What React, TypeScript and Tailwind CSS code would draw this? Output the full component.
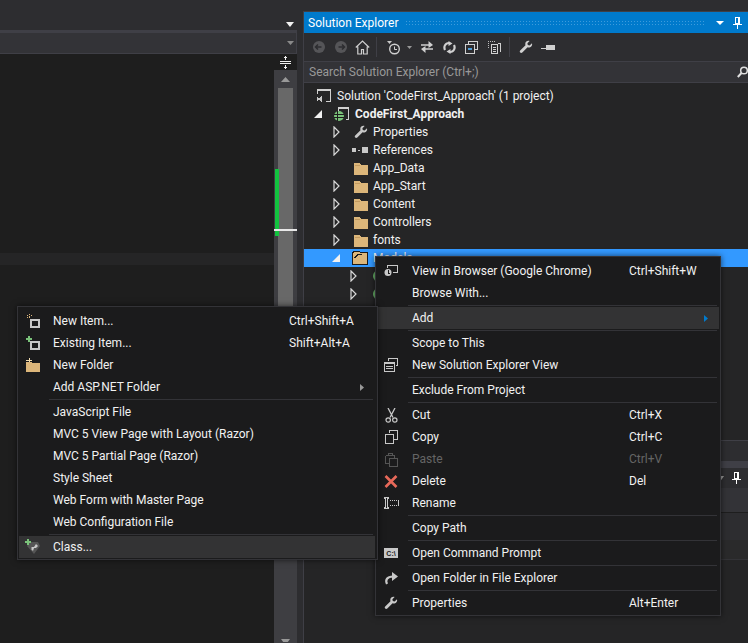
import type { ReactNode } from "react";

const Svg = ({ w = 16, h = 16, children }: { w?: number; h?: number; children: ReactNode }) => (
  <svg width={w} height={h} viewBox={`0 0 ${w} ${h}`} fill="none" shapeRendering="crispEdges" className="shrink-0">
    {children}
  </svg>
);

const Smooth = ({ w = 16, h = 16, children }: { w?: number; h?: number; children: ReactNode }) => (
  <svg width={w} height={h} viewBox={`0 0 ${w} ${h}`} fill="none" className="shrink-0">
    {children}
  </svg>
);

const FolderIcon = () => (
  <Svg w={14} h={13}>
    <path d="M0 1h6l1 2h7v10H0z" fill="#dcb67a" />
    <path d="M1 3h5v1H1z" fill="#c29a5f" />
  </Svg>
);

const OpenFolderIcon = () => (
  <Svg w={16} h={14}>
    <path d="M.5 2.500l1-2h6l1 1h7v12h-15z" fill="#dcb67a" stroke="#1b1b1c" />
    <path d="M2 6l3-3h5v1H6L3 7H2z" fill="#1b1b1c" />
  </Svg>
);

const WrenchIcon = ({ color = "#c8c8c8" }: { color?: string }) => (
  <Smooth w={14} h={14}>
    <path d="M13 3.200 10.600 5.400 8.800 5 8.400 3.200 10.600 1C8.600.3 6.600 1.400 6.300 3.400c-.1.7 0 1.300.2 1.800L1.200 10.400c-.6.6-.6 1.500 0 2.100.6.6 1.500.6 2.100 0l5.300-5.200c.6.200 1.200.3 1.800.2 2-.3 3.200-2.300 2.600-4.300z" fill={color} />
  </Smooth>
);

const RefsIcon = () => (
  <Svg w={16} h={8}>
    <path d="M0 2h4v4H0zM10 1h6v6h-6z" fill="#c8c8c8" />
    <path d="M6 4h2v1H6z" fill="#c8c8c8" />
  </Svg>
);

const SolutionIcon = () => (
  <Svg w={16} h={14}>
    <path d="M1.500 5V.5h13v12H10M1.500 1.500h13" stroke="#d0d0d0" />
    <path d="M1 8l2 1.500L6 7v6l-3-2.500L1 12z" fill="#c8c8c8" />
  </Svg>
);

const ProjectIcon = () => (
  <Svg w={15} h={14}>
    <path d="M4.500 4V.5h10v12H12M4.500 1.500h10" stroke="#d0d0d0" />
    <circle cx="5" cy="9" r="5" fill="#7ac27a" shapeRendering="auto" />
    <path d="M0 7h10v.5H0zM0 10h10v.5H0zM3 4h.5v10H3zM6.500 4h.5v10h-.5z" fill="#1e1e1e" />
  </Svg>
);

const ArrowOpen = () => (
  <Svg w={8} h={8}>
    <path d="M8 0v8H0z" fill="#f1f1f1" shapeRendering="auto" />
  </Svg>
);

const ArrowClosed = () => (
  <Smooth w={7} h={12}>
    <path d="M1 1l5 5-5 5z" stroke="#d8d8d8" strokeWidth="1.200" />
  </Smooth>
);

const GreenDot = () => <div className="h-[12px] w-[12px] rounded-full bg-[#68b168]" />;

type TreeItem = {
  label: ReactNode;
  icon: ReactNode;
  arrow?: "open" | "closed";
  level: 0 | 1 | 2 | 3;
  bold?: boolean;
  selected?: boolean;
};

const treeItems: TreeItem[] = [
  { label: "Solution 'CodeFirst_Approach' (1 project)", icon: <SolutionIcon />, level: 0 },
  { label: "CodeFirst_Approach", icon: <ProjectIcon />, arrow: "open", level: 1, bold: true },
  { label: "Properties", icon: <WrenchIcon />, arrow: "closed", level: 2 },
  { label: "References", icon: <RefsIcon />, arrow: "closed", level: 2 },
  { label: "App_Data", icon: <FolderIcon />, level: 2 },
  { label: "App_Start", icon: <FolderIcon />, arrow: "closed", level: 2 },
  { label: "Content", icon: <FolderIcon />, arrow: "closed", level: 2 },
  { label: "Controllers", icon: <FolderIcon />, arrow: "closed", level: 2 },
  { label: "fonts", icon: <FolderIcon />, arrow: "closed", level: 2 },
  { label: "Models", icon: <OpenFolderIcon />, arrow: "open", level: 2, selected: true },
  { label: "", icon: <GreenDot />, arrow: "closed", level: 3 },
  { label: "", icon: <GreenDot />, arrow: "closed", level: 3 },
];

const levelPad = { 0: "pl-0", 1: "pl-[7px]", 2: "pl-[25px]", 3: "pl-[42px]" };
const iconCell = { 0: "w-[19px] pr-[5px]", 1: "w-[30px] pr-[6px]", 2: "w-[30px] pr-[5px]", 3: "w-[30px] pr-[5px]" };

function TreeRow({ item }: { item: TreeItem }) {
  return (
    <div className={`flex h-[18px] items-center ${levelPad[item.level]} ${item.selected ? "bg-[#3399ff]" : ""}`}>
      <div className="flex w-[14px] items-center justify-center">
        {item.arrow === "open" && <ArrowOpen />}
        {item.arrow === "closed" && <ArrowClosed />}
      </div>
      <div className={`flex justify-end ${iconCell[item.level]}`}>{item.icon}</div>
      <span className={item.bold ? "font-bold" : ""}>{item.label}</span>
    </div>
  );
}

const ViewBrowserIcon = () => (
  <Svg w={14} h={12}>
    <path d="M3.500 2.500V.5h10v7H9" stroke="#c8c8c8" />
    <circle cx="4" cy="7.500" r="3.500" fill="#c8c8c8" shapeRendering="auto" />
    <path d="M4 5v3h2" stroke="#1b1b1c" />
  </Svg>
);

const NewViewIcon = () => (
  <Svg w={14} h={14}>
    <path d="M4.500 2.500V.5h9v7h-2" stroke="#c8c8c8" />
    <path d="M.5 4.500h10v9H.5z" fill="#1b1b1c" stroke="#c8c8c8" />
    <path d="M.5 5h10v1H.5zM3 8h6v1H3zM3 10h6v1H3zM1.500 8h1v1h-1zM1.500 10h1v1h-1z" fill="#c8c8c8" />
  </Svg>
);

const CutIcon = () => (
  <Smooth w={13} h={15}>
    <path d="M3 0l5 9.500M10 0 5 9.500" stroke="#c8c8c8" strokeWidth="1.300" />
    <circle cx="3.200" cy="12" r="2.200" stroke="#c8c8c8" strokeWidth="1.200" />
    <circle cx="9.800" cy="12" r="2.200" stroke="#c8c8c8" strokeWidth="1.200" />
  </Smooth>
);

const CopyIcon = () => (
  <Svg w={13} h={14}>
    <path d="M4.500 3V.5h8v9H9" stroke="#c8c8c8" />
    <path d="M.5 4.500h8v9h-8z" stroke="#c8c8c8" />
  </Svg>
);

const PasteIcon = () => (
  <Svg w={13} h={15}>
    <path d="M.5 3.500h9v3M3 3.500V1.500h4v2M.5 3.500v8h4" stroke="#555" />
    <path d="M4.500 6.500h8v8h-8z" stroke="#555" />
  </Svg>
);

const DeleteIcon = () => (
  <Smooth w={14} h={13}>
    <path d="M1.500 1l11 11M12.500 1l-11 11" stroke="#e8695a" strokeWidth="2.600" />
  </Smooth>
);

const RenameIcon = () => (
  <Svg w={15} h={12}>
    <path d="M0 0h5v2H4v8h1v2H0v-2h1V2H0z" fill="#c8c8c8" />
    <path d="M2 1h1v10H2z" fill="#1b1b1c" />
    <path d="M6 3h1M8 3h1M10 3h1M12 3h1M6 8h1M8 8h1M10 8h1M12 8h1M14 3h1v1h-1zM14 5h1v1h-1zM14 7h1v1h-1z" stroke="#c8c8c8" />
  </Svg>
);

const CmdIcon = () => (
  <div className="flex h-[10px] w-[14px] items-center justify-center bg-[#c8c8c8] font-['Liberation_Sans',sans-serif] text-[7px] leading-none font-bold text-[#1b1b1c]">
    C:\
  </div>
);

const OpenFolderArrow = () => (
  <Smooth w={14} h={13}>
    <path d="M3 12C1 8 3 4.500 9 4.500" stroke="#c8c8c8" strokeWidth="2.200" />
    <path d="M8 0l6 4.500L8 9z" fill="#c8c8c8" />
  </Smooth>
);

const NewItemIcon = ({ green }: { green?: boolean }) => (
  <Svg w={14} h={14}>
    {green ? (
      <path d="M2 0h2v2h2v2H4v2H2V4H0V2h2z" fill="#7ac27a" />
    ) : (
      <path d="M1 1h1v1H1zM3 0h1v1H3zM5 1h1v1H5zM1 3h1v1H1zM3 2h1v2H3z" fill="#dcb67a" />
    )}
    <path d="M4 5h10v9H4z" fill="#c8c8c8" />
    <path d="M6 7h6v5H6z" fill="#1b1b1c" />
  </Svg>
);

const NewFolderIcon = () => (
  <Svg w={14} h={14}>
    <path d="M0 4h5l1 1h8v9H0z" fill="#dcb67a" />
    <path d="M3 0h1v2h2v1H4v1H3V3H0V2h3z" fill="#f2dcae" />
  </Svg>
);

const ClassIcon = () => (
  <Smooth w={16} h={16}>
    <path d="M2 7 5 3h8l2 4-6 8z" fill="#555" />
    <path d="M6 8h3l2-3 2 2-2 2H9l-1 3-2-2 1-1z" fill="#c8c8c8" />
    <path d="M2 0h2v2h2v2H4v2H2V4H0V2h2z" fill="#7ac27a" />
  </Smooth>
);

type MenuEntry =
  | "sep"
  | { label: string; icon?: ReactNode; keys?: string; sub?: boolean; hot?: boolean; off?: boolean };

const mainMenu: MenuEntry[] = [
  { label: "View in Browser (Google Chrome)", icon: <ViewBrowserIcon />, keys: "Ctrl+Shift+W" },
  { label: "Browse With..." },
  "sep",
  { label: "Add", sub: true, hot: true },
  "sep",
  { label: "Scope to This" },
  { label: "New Solution Explorer View", icon: <NewViewIcon /> },
  "sep",
  { label: "Exclude From Project" },
  "sep",
  { label: "Cut", icon: <CutIcon />, keys: "Ctrl+X" },
  { label: "Copy", icon: <CopyIcon />, keys: "Ctrl+C" },
  { label: "Paste", icon: <PasteIcon />, keys: "Ctrl+V", off: true },
  { label: "Delete", icon: <DeleteIcon />, keys: "Del" },
  { label: "Rename", icon: <RenameIcon /> },
  "sep",
  { label: "Copy Path" },
  "sep",
  { label: "Open Command Prompt", icon: <CmdIcon /> },
  "sep",
  { label: "Open Folder in File Explorer", icon: <OpenFolderArrow /> },
  "sep",
  { label: "Properties", icon: <WrenchIcon />, keys: "Alt+Enter" },
];

const addMenu: MenuEntry[] = [
  { label: "New Item...", icon: <NewItemIcon />, keys: "Ctrl+Shift+A" },
  { label: "Existing Item...", icon: <NewItemIcon green />, keys: "Shift+Alt+A" },
  { label: "New Folder", icon: <NewFolderIcon /> },
  { label: "Add ASP.NET Folder", sub: true },
  "sep",
  { label: "JavaScript File" },
  { label: "MVC 5 View Page with Layout (Razor)" },
  { label: "MVC 5 Partial Page (Razor)" },
  { label: "Style Sheet" },
  { label: "Web Form with Master Page" },
  { label: "Web Configuration File" },
  "sep",
  { label: "Class...", icon: <ClassIcon />, hot: true },
];

type MenuListProps = {
  entries: MenuEntry[];
  arrowColor: string;
  iconWidth: string;
  keysWidth: string;
  sepPad: string;
};

function MenuList({ entries, arrowColor, iconWidth, keysWidth, sepPad }: MenuListProps) {
  return (
    <>
      {entries.map((entry, i) =>
        entry === "sep" ? (
          <div key={i} className={`flex h-[3px] items-center pr-[2px] ${sepPad}`}>
            <div className="h-px w-full bg-[#333337]" />
          </div>
        ) : (
          <div
            key={i}
            className={`flex h-[22px] items-center ${entry.hot ? "bg-[#333334]" : ""} ${entry.off ? "text-[#656565]" : ""}`}
          >
            <div className={`flex items-center justify-center ${iconWidth}`}>{entry.icon}</div>
            <div className="flex-1 whitespace-nowrap">{entry.label}</div>
            <div className={`flex items-center whitespace-nowrap ${keysWidth}`}>
              {entry.keys}
              {entry.sub && (
                <svg width="4" height="7" viewBox="0 0 4 7" className="mr-[11px] ml-auto">
                  <path d="M0 0l4 3.500L0 7z" fill={arrowColor} />
                </svg>
              )}
            </div>
          </div>
        ),
      )}
    </>
  );
}

function Toolbar() {
  return (
    <div className="flex h-[28px] items-center pl-[8px]">
      <Smooth w={14} h={14}>
        <circle cx="7" cy="7" r="6" fill="#555558" />
        <path d="M9.500 7h-6M6 4.500 3.500 7 6 9.500" stroke="#2d2d30" strokeWidth="1.500" />
      </Smooth>
      <div className="ml-[8px]">
        <Smooth w={14} h={14}>
          <circle cx="7" cy="7" r="6" fill="#555558" />
          <path d="M4.500 7h6M8 4.500 10.500 7 8 9.500" stroke="#2d2d30" strokeWidth="1.500" />
        </Smooth>
      </div>
      <div className="ml-[7px]">
        <Smooth w={15} h={15}>
          <path d="M.8 7.500 7.500 1l6.700 6.500M2.800 6.500v7.500h3.700V9.500h2v4.500h3.700V6.500" stroke="#d0d0d0" strokeWidth="1.200" />
        </Smooth>
      </div>
      <div className="ml-[6px] h-[20px] w-px bg-[#3f3f46]" />
      <div className="ml-[9px]">
        <Smooth w={15} h={15}>
          <path d="M1 1h5L3.500 4z" fill="#c8c8c8" />
          <circle cx="8.500" cy="9" r="4.800" stroke="#d0d0d0" strokeWidth="1.400" />
          <path d="M8.500 6.500V9.500H11" stroke="#d0d0d0" />
        </Smooth>
      </div>
      <svg width="5" height="3" viewBox="0 0 5 3" className="ml-[6px]">
        <path d="M0 0h5L2.500 3z" fill="#999" />
      </svg>
      <div className="ml-[8px]">
        <Smooth w={14} h={12}>
          <path d="M1 4h9M13 8H4" stroke="#d0d0d0" strokeWidth="1.600" />
          <path d="M8.500 0 13 4 8.500 7zM5.500 5 1 8l4.500 4z" fill="#d0d0d0" />
        </Smooth>
      </div>
      <div className="ml-[9px]">
        <Smooth w={13} h={13}>
          <path d="M2 9C.5 6 2 2 6 2M11 4c1.500 3 0 7-4 7" stroke="#d0d0d0" strokeWidth="2.200" />
          <path d="M5.500 0l4 2.500-4 2.500zM7.500 8l-4 2.500 4 2.500z" fill="#d0d0d0" />
        </Smooth>
      </div>
      <div className="ml-[9px]">
        <Svg w={13} h={13}>
          <path d="M3.500 3V.5h9v8H10" stroke="#d0d0d0" />
          <path d="M.5 3.500h9v9h-9z" stroke="#d0d0d0" />
          <path d="M3 7h4v2H3z" fill="#4f9ed8" />
        </Svg>
      </div>
      <div className="ml-[9px]">
        <Svg w={14} h={14}>
          <path d="M1 1h1M3 1h1M5 1h1M7 1h1M1 3h1M1 5h1M1 7h1" stroke="#bbb" />
          <path d="M4.500 4.500h6v9h-6zM10.500 3.500h3v8M6 7h3M6 9h3M6 11h3" stroke="#d0d0d0" />
        </Svg>
      </div>
      <div className="ml-[8px] h-[20px] w-px bg-[#3f3f46]" />
      <div className="ml-[9px]">
        <WrenchIcon color="#d0d0d0" />
      </div>
      <div className="mt-[2px] ml-[8px]">
        <Svg w={14} h={6}>
          <path d="M0 3h6v1H0zM5 0h9v5H5z" fill="#d0d0d0" />
        </Svg>
      </div>
    </div>
  );
}

const PinIcon = () => (
  <Svg w={9} h={12}>
    <path d="M2.500.5h4v6h-4z" stroke="#fff" />
    <path d="M5 1h1v5H5zM0 7h9v1H0zM4 8h1v4H4z" fill="#fff" />
  </Svg>
);

export default function App() {
  return (
    <div className="relative flex h-[643px] w-[748px] overflow-hidden bg-[#2d2d30] font-['Roboto',sans-serif] text-[12px] leading-none text-[#f1f1f1]">
      {/* left side: editor, with its scrollbar */}
      <div className="flex w-[297px] shrink-0 flex-col">
        <div className="flex h-[30px] items-end justify-end pr-[3px] pb-[3px]">
          <svg width="8" height="5" viewBox="0 0 8 5">
            <path d="M0 0h8L4 5z" fill="#f1f1f1" />
          </svg>
        </div>
        <div className="h-[3px] bg-[#3f3f46]" />
        <div className="flex h-[21px] items-center justify-end border-r border-b border-[#3f3f46] bg-[#333337] pr-[1px]">
          <svg width="7" height="4" viewBox="0 0 7 4" className="mr-[1px]">
            <path d="M0 0h7L3.500 4z" fill="#8a8a8a" />
          </svg>
        </div>
        <div className="flex min-h-0 flex-1">
          <div className="flex flex-1 flex-col bg-[#1e1e1e]">
            <div className="h-[199px]" />
            <div className="h-[12px] bg-[#252526]" />
          </div>
          <div className="relative flex w-[23px] flex-col items-center bg-[#3e3e42]">
            <div className="flex h-[16px] w-full items-center justify-center bg-[#1e1e1e]">
              <Svg w={11} h={13}>
                <path d="M0 5h11v1H0zM0 7h11v1H0zM5 0h1v4H5zM5 9h1v4H5zM4 1h3v1H4zM4 11h3v1H4z" fill="#f1f1f1" />
              </Svg>
            </div>
            <div className="flex h-[18px] items-center">
              <svg width="9" height="5" viewBox="0 0 9 5">
                <path d="M4.500 0 9 5H0z" fill="#999" />
              </svg>
            </div>
            <div className="h-[470px] w-[15px] bg-[#686868]" />
            <div className="mt-auto pb-[1px]">
              <svg width="9" height="3" viewBox="0 0 9 3" className="block">
                <path d="M0 0h9L6.800 3H2.200z" fill="#999" />
              </svg>
            </div>
            <div className="absolute top-[115px] left-[1px] h-[67px] w-[4px] bg-[#13c33f]" />
            <div className="absolute top-[175px] left-0 h-[2px] w-full bg-[#e8e8e8]" />
          </div>
        </div>
      </div>

      {/* Solution Explorer panel */}
      <div className="mt-[11px] ml-[6px] flex flex-1 flex-col border-t border-l border-[#3f3f46] bg-[#252526]">
        <div className="flex h-[21px] items-center bg-[#007acc] pr-[6px] pl-[4px] text-white">
          <span>Solution Explorer</span>
          <div className="mx-[7px] h-[5px] flex-1 bg-[radial-gradient(#3d9bdc_1px,transparent_1px)] bg-[length:3px_3px]" />
          <svg width="8" height="4" viewBox="0 0 8 4" className="mr-[9px] ml-[4px]">
            <path d="M0 0h8L4 4z" fill="#fff" />
          </svg>
          <PinIcon />
        </div>
        <div className="bg-[#2d2d30]">
          <Toolbar />
        </div>
        <div className="flex h-[22px] items-center border-y border-[#3f3f46] bg-[#333337] pl-[5px] text-[#999999]">
          <span className="flex-1">Search Solution Explorer (Ctrl+;)</span>
          <Smooth w={11} h={12}>
            <circle cx="7" cy="4.500" r="3.300" stroke="#e0e0e0" strokeWidth="1.500" />
            <path d="M4.500 7 .8 11" stroke="#e0e0e0" strokeWidth="2" />
          </Smooth>
        </div>
        <div className="flex h-[357px] flex-col pt-[4px]">
          {treeItems.map((item, i) => (
            <TreeRow key={i} item={item} />
          ))}
        </div>
        <div className="h-px bg-[#3f3f46]" />
        <div className="h-[20px] bg-[#2d2d30]" />
        <div className="h-[7px] bg-[#3f3f46]" />
        <div className="flex h-[20px] items-center justify-end bg-[#2d2d30] pr-[7px]">
          <svg width="7" height="5" viewBox="0 0 7 5" className="mr-[8px]">
            <path d="M0 0h7L3.500 5z" fill="#999" />
          </svg>
          <PinIcon />
        </div>
        <div className="h-[24px] bg-[#333337]" />
        <div className="h-px bg-[#1e1e1e]" />
        <div className="h-[27px] bg-[#2d2d30]" />
        <div className="h-[19px] bg-[#2a2a2b]" />
        <div className="h-px bg-[#333337]" />
      </div>

      {/* context menus */}
      <div className="absolute top-[256px] left-[375px] flex h-[360px] w-[346px] flex-col border border-[#333337] bg-[#1b1b1c] px-px pt-[3px] shadow-[0_0_6px_rgba(0,0,0,0.6)]">
        <MenuList entries={mainMenu} arrowColor="#007acc" iconWidth="w-[35px] pr-[7px]" keysWidth="w-[90px]" sepPad="pl-[31px]" />
      </div>
      <div className="absolute top-[306px] left-[17px] flex h-[254px] w-[361px] flex-col border border-[#333337] bg-[#1b1b1c] pt-[3px] pr-[2px] pl-px shadow-[0_0_6px_rgba(0,0,0,0.6)]">
        <MenuList entries={addMenu} arrowColor="#999999" iconWidth="w-[34px] pr-[6px]" keysWidth="w-[86px]" sepPad="pl-[30px]" />
      </div>
    </div>
  );
}
